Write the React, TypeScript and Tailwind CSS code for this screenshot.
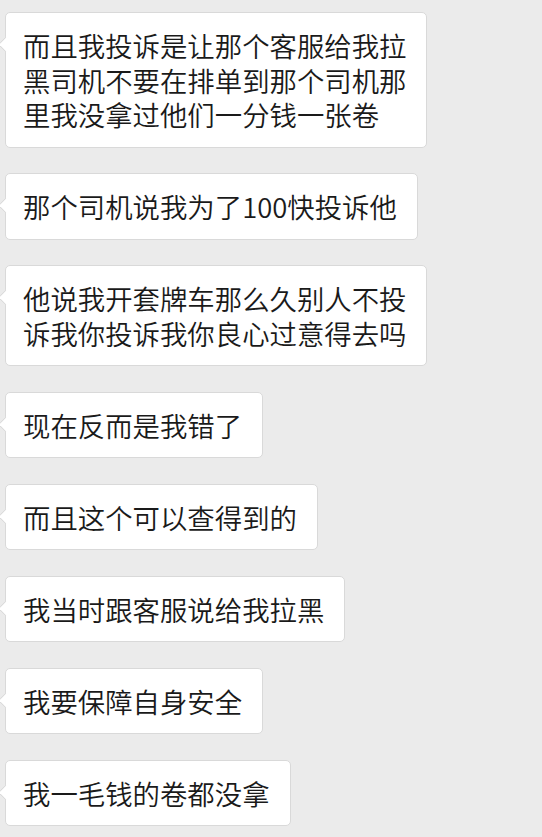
import React from "react";

const messages: string[][] = [
  ["而且我投诉是让那个客服给我拉", "黑司机不要在排单到那个司机那", "里我没拿过他们一分钱一张卷"],
  ["那个司机说我为了100快投诉他"],
  ["他说我开套牌车那么久别人不投", "诉我你投诉我你良心过意得去吗"],
  ["现在反而是我错了"],
  ["而且这个可以查得到的"],
  ["我当时跟客服说给我拉黑"],
  ["我要保障自身安全"],
  ["我一毛钱的卷都没拿"],
];

const Bubble: React.FC<{ lines: string[] }> = ({ lines }) => (
  <div className="relative ml-[5px] bg-white border border-[#d9d9d9] rounded-[5px] pl-[17px] pr-[20px] py-[15px] text-[27.4px] leading-[34.5px] font-[350] text-[#1a1a1a]">
    {/* tail */}
    <div className="absolute left-[-6px] top-[26px] w-[11px] h-[11px] bg-white border-l border-b border-[#d9d9d9] rotate-45" />
    {lines.map((l, i) => (
      <div key={i} className="relative whitespace-nowrap">
        {l}
      </div>
    ))}
  </div>
);

export default function App() {
  return (
    <div
      className="w-[542px] h-[837px] bg-[#ebebeb] overflow-hidden pt-[12px]"
      style={{ fontFamily: '"Noto Sans CJK SC", "Noto Sans", sans-serif' }}
    >
      <div className="flex flex-col items-start gap-[25.5px]">
        {messages.map((m, i) => (
          <Bubble key={i} lines={m} />
        ))}
      </div>
    </div>
  );
}
